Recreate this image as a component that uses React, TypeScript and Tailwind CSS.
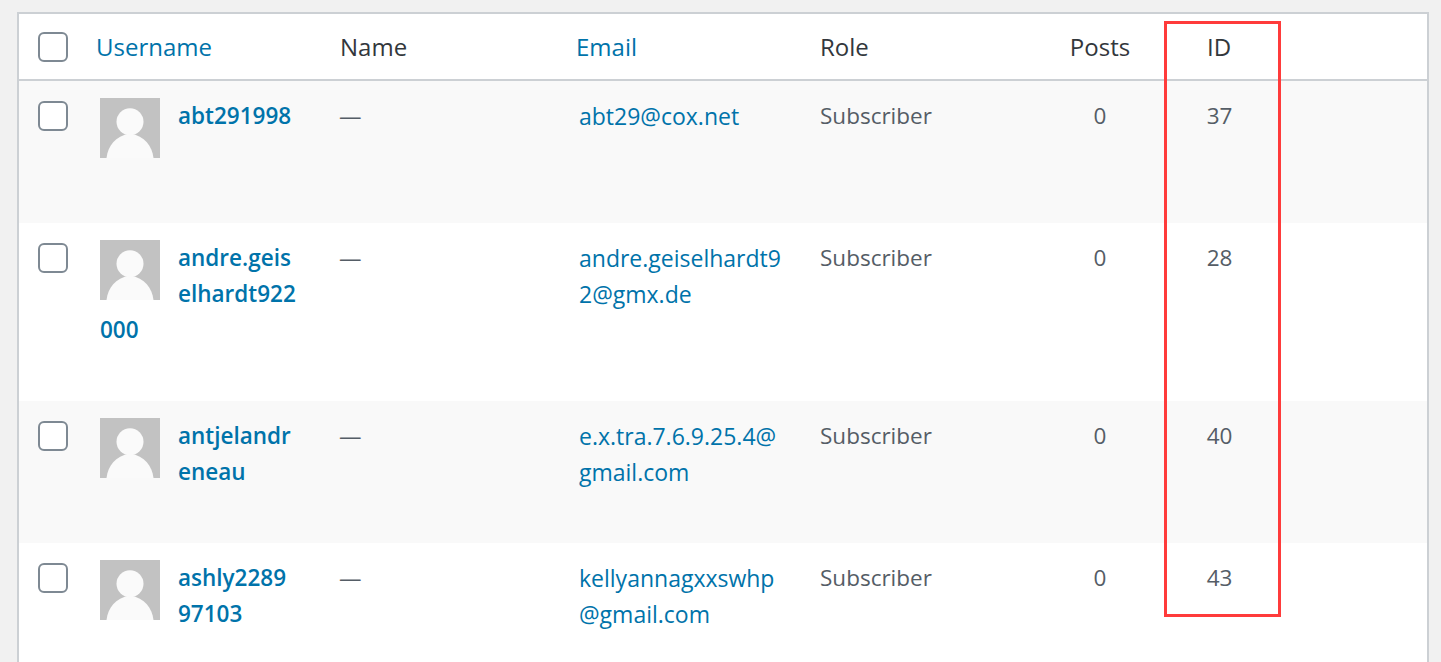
const users = [
  { username: 'abt291998', email: 'abt29@cox.net', id: 37, height: 'h-[142px]', stripe: 'bg-[#f9f9f9]' },
  { username: 'andre.geiselhardt922000', email: 'andre.geiselhardt92@gmx.de', id: 28, height: 'h-[178px]', stripe: 'bg-white' },
  { username: 'antjelandreneau', email: 'e.x.tra.7.6.9.25.4@gmail.com', id: 40, height: 'h-[142px]', stripe: 'bg-[#f9f9f9]' },
  { username: 'ashly228997103', email: 'kellyannagxxswhp@gmail.com', id: 43, height: 'h-[143px]', stripe: 'bg-white' },
];

function Checkbox() {
  return <span className="block w-[30px] h-[30px] rounded-[6px] border-2 border-[#7e8993] bg-white" />;
}

function Avatar() {
  return (
    <svg viewBox="0 0 60 60" className="float-left w-[60px] h-[60px] mr-[18px]">
      <rect width="60" height="60" fill="#c2c2c2" />
      <circle cx="30" cy="23.700" r="13.500" fill="#fafafa" />
      <path d="M6.500 60C8 48 15 38 30 35.500C45 38 52 48 53.500 60z" fill="#fafafa" />
    </svg>
  );
}

export default function App() {
  return (
    <div className="relative h-[662px] overflow-hidden bg-[#f1f1f1] pt-3 pl-[17px] font-['Open_Sans',sans-serif] text-[22.5px] leading-[36px] text-[#555d66]">
      <table className="w-[1412px] table-fixed border-2 border-[#ccd0d4] bg-white border-separate border-spacing-0">
        <colgroup>
          <col className="w-[61px]" />
          <col className="w-[244px]" />
          <col className="w-[236px]" />
          <col className="w-[244px]" />
          <col className="w-[236px]" />
          <col className="w-[120px]" />
          <col className="w-[120px]" />
          <col />
        </colgroup>
        <thead>
          <tr className="h-[67px] text-[24px] text-[#32373c]">
            <th className="border-b-2 border-[#ccd0d4] pl-[19px] font-normal"><Checkbox /></th>
            <th className="border-b-2 border-[#ccd0d4] pl-4 text-left font-normal text-[#0073aa]">Username</th>
            <th className="border-b-2 border-[#ccd0d4] pl-4 text-left font-normal">Name</th>
            <th className="border-b-2 border-[#ccd0d4] pl-4 text-left font-normal text-[#0073aa]">Email</th>
            <th className="border-b-2 border-[#ccd0d4] pl-4 text-left font-normal">Role</th>
            <th className="border-b-2 border-[#ccd0d4] font-normal">Posts</th>
            <th className="border-b-2 border-[#ccd0d4] pr-[2px] font-normal">ID</th>
            <th className="border-b-2 border-[#ccd0d4]" />
          </tr>
        </thead>
        <tbody>
          {users.map((user) => (
            <tr key={user.id} className={`${user.height} ${user.stripe} align-top`}>
              <td className="pl-[19px] pt-5"><Checkbox /></td>
              <td className="pl-5 pr-[27px] pt-[17px] break-all font-semibold text-[#0073aa]">
                <Avatar />
                {user.username}
              </td>
              <td className="pl-[15px] pt-[17px]">—</td>
              <td className="pl-[19px] pr-[22px] pt-[17px] break-all text-[23px] text-[#0073aa]">{user.email}</td>
              <td className="pl-4 pt-[17px]">Subscriber</td>
              <td className="pt-[17px] text-center">0</td>
              <td className="pr-[1px] pt-[17px] text-center">{user.id}</td>
              <td />
            </tr>
          ))}
        </tbody>
      </table>

      {/* red highlight drawn over the ID column */}
      <div className="absolute left-[1164px] top-[21px] w-[117px] h-[596px] border-[3px] border-[#ff3b3b]" />
    </div>
  );
}
